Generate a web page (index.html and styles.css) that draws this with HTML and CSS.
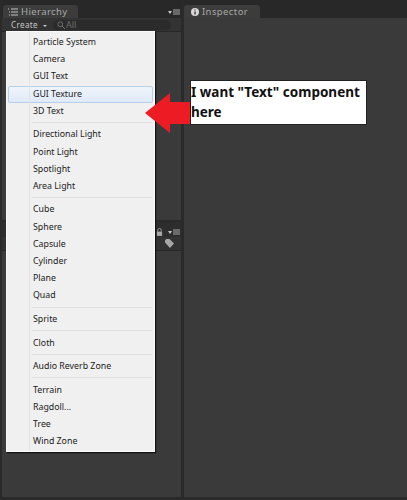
FILE: index.html
```html
<!DOCTYPE html>
<html lang="en">

<head>
    <meta charset="UTF-8">
    <meta name="viewport" content="width=device-width, initial-scale=1.0">
    <title>Create menu</title>
    <link rel="stylesheet" href="styles.css">
</head>

<body>
    <div class="editor">
        <section class="left-column">
            <div class="panel hierarchy">
                <div class="tab-strip">
                    <div class="tab">
                        <svg class="tab-icon" width="10" height="8" viewBox="0 0 10 8">
                            <path d="M0 1h1M3 1h7M1 4h1M3 4h7M1 7h1M3 7h7" stroke="#c4c4c4" stroke-width="1" fill="none" />
                        </svg>
                        <span>Hierarchy</span>
                    </div>
                    <svg class="panel-menu" width="12" height="7" viewBox="0 0 12 7">
                        <path d="M0 2h4L2 5z" fill="#c8c8c8" />
                        <path d="M5 1h7M5 3h7M5 5h7" stroke="#a8a8a8" stroke-width="1" fill="none" />
                    </svg>
                </div>
                <div class="toolbar">
                    <span class="create-btn">Create <i class="caret"></i></span>
                    <div class="search">
                        <svg width="8" height="8" viewBox="0 0 8 8">
                            <circle cx="3.2" cy="3.2" r="2.4" stroke="#6e6e6e" fill="none" />
                            <path d="M5 5l3 3" stroke="#6e6e6e" />
                        </svg>
                        <span>All</span>
                    </div>
                </div>
            </div>
            <div class="panel lower">
                <div class="lower-strip">
                    <svg width="7" height="8" viewBox="0 0 8 9">
                        <path d="M2 4V2.500a2 2 0 0 1 4 0V4" stroke="#a8a8a8" fill="none" />
                        <rect x="1" y="4" width="6" height="5" fill="#a8a8a8" />
                    </svg>
                    <svg width="12" height="7" viewBox="0 0 12 7">
                        <path d="M0 2h4L2 5z" fill="#c8c8c8" />
                        <path d="M5 1h7M5 3h7M5 5h7" stroke="#a8a8a8" stroke-width="1" fill="none" />
                    </svg>
                </div>
                <div class="lower-toolbar">
                    <svg width="9" height="9" viewBox="0 0 10 10">
                        <path d="M0 1.500L1.500 0H5l5 5-4.500 5L0 4z" fill="#a8a8a8" />
                    </svg>
                </div>
            </div>
        </section>

        <section class="panel inspector">
            <div class="tab-strip">
                <div class="tab inspector-tab">
                    <svg class="tab-icon" width="8" height="8" viewBox="0 0 8 8">
                        <circle cx="4" cy="4" r="4" fill="#d8d8d8" />
                        <path d="M4 1.500v1M4 3.500V6.500" stroke="#333" stroke-width="1.300" />
                    </svg>
                    <span>Inspector</span>
                </div>
            </div>
        </section>
    </div>

    <ul class="menu">
        <li>Particle System</li>
        <li>Camera</li>
        <li>GUI Text</li>
        <li class="hover">GUI Texture</li>
        <li>3D Text</li>
        <li class="divider"></li>
        <li>Directional Light</li>
        <li>Point Light</li>
        <li>Spotlight</li>
        <li>Area Light</li>
        <li class="divider"></li>
        <li>Cube</li>
        <li>Sphere</li>
        <li>Capsule</li>
        <li>Cylinder</li>
        <li>Plane</li>
        <li>Quad</li>
        <li class="divider"></li>
        <li>Sprite</li>
        <li class="divider"></li>
        <li>Cloth</li>
        <li class="divider"></li>
        <li>Audio Reverb Zone</li>
        <li class="divider"></li>
        <li>Terrain</li>
        <li>Ragdoll...</li>
        <li>Tree</li>
        <li>Wind Zone</li>
    </ul>

    <svg class="arrow" width="46" height="40" viewBox="0 0 46 40">
        <path d="M0 20L25 0V9H46V31H25V40z" fill="#ed1c24" />
    </svg>

    <div class="callout">I want "Text" component here</div>
</body>

</html>
```

FILE: styles.css
```css
body {
    margin: 0;
    width: 407px;
    height: 500px;
    overflow: hidden;
    position: relative;
    background-color: #2a2a2a;
    font-family: 'Noto Sans', 'Open Sans', sans-serif;
    color: #c4c4c4;
}

.editor {
    display: flex;
    gap: 3px;
    height: 500px;
    padding-left: 2px;
    box-sizing: border-box;
}

.left-column {
    width: 179px;
    display: flex;
    flex-direction: column;
    gap: 2px;
}

.panel {
    background-color: #3a3a3a;
}

.hierarchy {
    height: 220px;
}

.lower {
    flex: 1;
    margin-bottom: 3px;
}

.inspector {
    flex: 1;
    margin-bottom: 3px;
}

.tab-strip {
    height: 18px;
    display: flex;
    align-items: flex-end;
    justify-content: space-between;
    background-color: #282828;
}

.tab {
    width: 75px;
    height: 13px;
    margin-left: 1px;
    display: flex;
    align-items: center;
    gap: 3px;
    padding-left: 5px;
    box-sizing: border-box;
    background-color: #3c3c3c;
    border-radius: 3px 3px 0 0;
    font-size: 9.500px;
    letter-spacing: 0.4px;
    color: #a8a8a8;
}

.inspector-tab {
    width: 76px;
    margin-left: 0;
    padding-left: 7px;
}

.panel-menu {
    margin: 0 1px 2px 0;
}

.toolbar {
    height: 13px;
    display: flex;
    align-items: center;
    background-color: #333;
    border-bottom: 1px solid #282828;
}

.create-btn {
    width: 49px;
    padding-left: 9px;
    box-sizing: border-box;
    font-size: 8px;
    letter-spacing: 0.4px;
    color: #c8c8c8;
}

.caret {
    display: inline-block;
    border-left: 2px solid transparent;
    border-right: 2px solid transparent;
    border-top: 2px solid #c8c8c8;
    margin: 0 0 1px 3px;
}

.search {
    width: 118px;
    height: 10px;
    display: flex;
    align-items: center;
    gap: 1px;
    padding-left: 4px;
    margin-left: 2px;
    box-sizing: border-box;
    background-color: #2b2b2b;
    border-radius: 5px;
    font-size: 9px;
    color: #6e6e6e;
}

.lower-strip {
    height: 15px;
    display: flex;
    align-items: flex-end;
    justify-content: flex-end;
    gap: 5px;
    padding: 0 1px 1px 0;
    box-sizing: border-box;
    background-color: #2d2d2d;
}

.lower-toolbar {
    height: 14px;
    display: flex;
    align-items: center;
    justify-content: flex-end;
    padding-right: 7px;
    box-sizing: border-box;
    background-color: #333;
    border-bottom: 1px solid #282828;
}

.menu {
    position: absolute;
    left: 6px;
    top: 31px;
    width: 149px;
    height: 421px;
    margin: 0;
    padding: 2px 1px 0;
    box-sizing: border-box;
    list-style: none;
    background-color: #f0f0f0;
    border: 1px solid #fbfbfb;
    box-shadow: 1px 1px 1px #111;
    font-size: 8.800px;
    color: #1a1a1a;
}

/* icon gutter line on the left of the items */
.menu::before {
    content: '';
    position: absolute;
    left: 22px;
    top: 0;
    bottom: 0;
    width: 1px;
    background-color: #e4e4e4;
}

.menu li {
    height: 17.200px;
    line-height: 17px;
    padding-left: 25px;
    box-sizing: border-box;
}

.menu li.hover {
    background: linear-gradient(#f0f4fb, #dfe9f7);
    outline: 1px solid #b8cfe9;
    outline-offset: -1px;
    border-radius: 2px;
}

.menu li.divider {
    height: 6.400px;
    margin: 0 1px 0 24px;
    padding: 0;
    background: linear-gradient(#e0e0e0, #e0e0e0) no-repeat 0 2px / 100% 1px;
}

.arrow {
    position: absolute;
    left: 145px;
    top: 93px;
}

.callout {
    position: absolute;
    left: 191px;
    top: 81px;
    width: 175px;
    height: 43px;
    padding-top: 1px;
    box-sizing: border-box;
    background-color: #fff;
    outline: 1px solid #222;
    font-weight: bold;
    font-size: 13.500px;
    line-height: 20px;
    color: #111;
}
```
